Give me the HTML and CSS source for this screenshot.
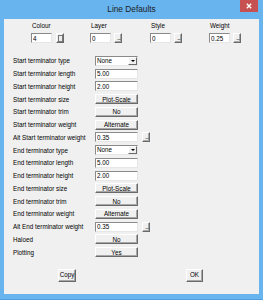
FILE: index.html
```html
<!DOCTYPE html>
<html lang="en">
<head>
    <meta charset="UTF-8">
    <meta name="viewport" content="width=device-width, initial-scale=1.0">
    <title>Line Defaults</title>
    <link rel="stylesheet" href="styles.css">
</head>
<body>
    <div class="window">
        <div class="titlebar">
            <span></span>
            <span class="title">Line Defaults</span>
            <span class="close">
                <svg width="6" height="6" viewBox="0 0 6 6"><path d="M0.8 0.8 L5.2 5.2 M5.2 0.8 L0.8 5.2" stroke="#fff" stroke-width="1.4"/></svg>
            </span>
        </div>
        <div class="client">
            <div class="top">
                <div class="field">
                    <label>Colour</label>
                    <div class="pair"><input class="box small" value="4"><button class="btn pick"><span class="swatch"></span></button></div>
                </div>
                <div class="field">
                    <label>Layer</label>
                    <div class="pair"><input class="box small" value="0"><button class="btn dots">...</button></div>
                </div>
                <div class="field">
                    <label>Style</label>
                    <div class="pair"><input class="box small" value="0"><button class="btn dots">...</button></div>
                </div>
                <div class="field">
                    <label>Weight</label>
                    <div class="pair"><input class="box small" value="0.25"><button class="btn dots">...</button></div>
                </div>
            </div>

            <div class="rows">
                <label>Start terminator type</label>
                <div class="select"><span class="val">None</span><span class="drop"><span class="arrow"></span></span></div>
                <span></span>

                <label>Start terminator length</label>
                <input class="box" value="5.00">
                <span></span>

                <label>Start terminator height</label>
                <input class="box" value="2.00">
                <span></span>

                <label>Start terminator size</label>
                <button class="btn wide">Plot-Scale</button>
                <span></span>

                <label>Start terminator trim</label>
                <button class="btn wide">No</button>
                <span></span>

                <label>Start terminator weight</label>
                <button class="btn wide">Alternate</button>
                <span></span>

                <label>Alt Start terminator weight</label>
                <input class="box" value="0.35">
                <button class="btn dots">...</button>

                <label>End terminator type</label>
                <div class="select"><span class="val">None</span><span class="drop"><span class="arrow"></span></span></div>
                <span></span>

                <label>End terminator length</label>
                <input class="box" value="5.00">
                <span></span>

                <label>End terminator height</label>
                <input class="box" value="2.00">
                <span></span>

                <label>End terminator size</label>
                <button class="btn wide">Plot-Scale</button>
                <span></span>

                <label>End terminator trim</label>
                <button class="btn wide">No</button>
                <span></span>

                <label>End terminator weight</label>
                <button class="btn wide">Alternate</button>
                <span></span>

                <label>Alt End terminator weight</label>
                <input class="box" value="0.35">
                <button class="btn dots">...</button>

                <label>Haloed</label>
                <button class="btn wide">No</button>
                <span></span>

                <label>Plotting</label>
                <button class="btn wide">Yes</button>
                <span></span>
            </div>

            <div class="actions">
                <button class="btn copy">Copy</button>
                <button class="btn ok">OK</button>
            </div>
        </div>
    </div>
</body>
</html>
```

FILE: styles.css
```css
body{
    margin: 0;
    font-family: "Liberation Sans", Arial, sans-serif;
    font-size: 6.3px;
    color: #000;
}
.window{
    width: 263px;
    height: 300px;
    background: #68b4ee;
    display: flex;
    flex-direction: column;
    box-sizing: border-box;
    border-bottom: 1px solid #4f9fe0;
}
.titlebar{
    height: 19px;
    display: grid;
    grid-template-columns: 1fr auto 1fr;
    align-items: start;
}
.title{
    font-size: 8.3px;
    color: #1c1c1c;
    line-height: 18px;
}
.close{
    justify-self: end;
    margin-right: 5px;
    width: 18px;
    height: 12px;
    background: #c75050;
    display: flex;
    align-items: center;
    justify-content: center;
}
.close svg{
    display: block;
}
.client{
    flex: 1;
    margin: 0 4px 5px 4px;
    background: #f0f0f0;
}

/* top group */
.top{
    display: grid;
    grid-template-columns: 59px 60px 59px auto;
    padding: 3px 0 0 27px;
}
.field label{
    display: block;
    line-height: 8px;
    padding-left: 1px;
}
.pair{
    display: flex;
    gap: 3px;
    margin-top: 3px;
}

/* controls */
.box{
    width: 43px;
    height: 10px;
    box-sizing: border-box;
    margin: 0;
    padding: 0 1px;
    font: inherit;
    color: #000;
    background: #fff;
    border: 1px solid;
    border-color: #8a8a8a #e6e6e6 #e6e6e6 #8a8a8a;
    outline: none;
}
.box.small{
    width: 21px;
}
.btn{
    height: 10px;
    box-sizing: border-box;
    margin: 0;
    padding: 0;
    font: inherit;
    color: #000;
    background: #f0f0f0;
    border: 1px solid;
    border-color: #fff #6a6a6a #6a6a6a #fff;
    box-shadow: inset -1px -1px 0 #a8a8a8;
    line-height: 7px;
    text-align: center;
}
.btn.wide{
    width: 43px;
}
.btn.dots{
    width: 8px;
    font-size: 7px;
    line-height: 8px;
    color: #333;
    letter-spacing: -1px;
    text-indent: 1px;
    overflow: hidden;
}
.btn.pick{
    width: 8px;
    margin-left: 1px;
    display: flex;
    align-items: center;
    justify-content: center;
}
.swatch{
    width: 3px;
    height: 5px;
    border: 1px solid #777;
    background: #ececec;
}
.select{
    width: 43px;
    height: 10px;
    box-sizing: border-box;
    display: flex;
    background: #fff;
    border: 1px solid;
    border-color: #8a8a8a #e6e6e6 #e6e6e6 #8a8a8a;
}
.select .val{
    flex: 1;
    padding-left: 1px;
    line-height: 8px;
}
.drop{
    width: 9px;
    background: #f0f0f0;
    box-sizing: border-box;
    border: 1px solid;
    border-color: #fff #6a6a6a #6a6a6a #fff;
    display: flex;
    align-items: center;
    justify-content: center;
}
.arrow{
    width: 0;
    height: 0;
    border-left: 2px solid transparent;
    border-right: 2px solid transparent;
    border-top: 2px solid #000;
}

/* labelled rows */
.rows{
    display: grid;
    grid-template-columns: 82px 43px auto;
    grid-auto-rows: 12.75px;
    align-items: center;
    padding-left: 9px;
    margin-top: 11.5px;
}
.rows .dots{
    margin-left: 4px;
}

/* bottom buttons */
.actions{
    display: flex;
    padding-left: 54px;
    margin-top: 10px;
}
.actions .btn{
    height: 13px;
    line-height: 10px;
}
.copy{
    width: 18px;
}
.ok{
    width: 17px;
    margin-left: 110px;
}
```
